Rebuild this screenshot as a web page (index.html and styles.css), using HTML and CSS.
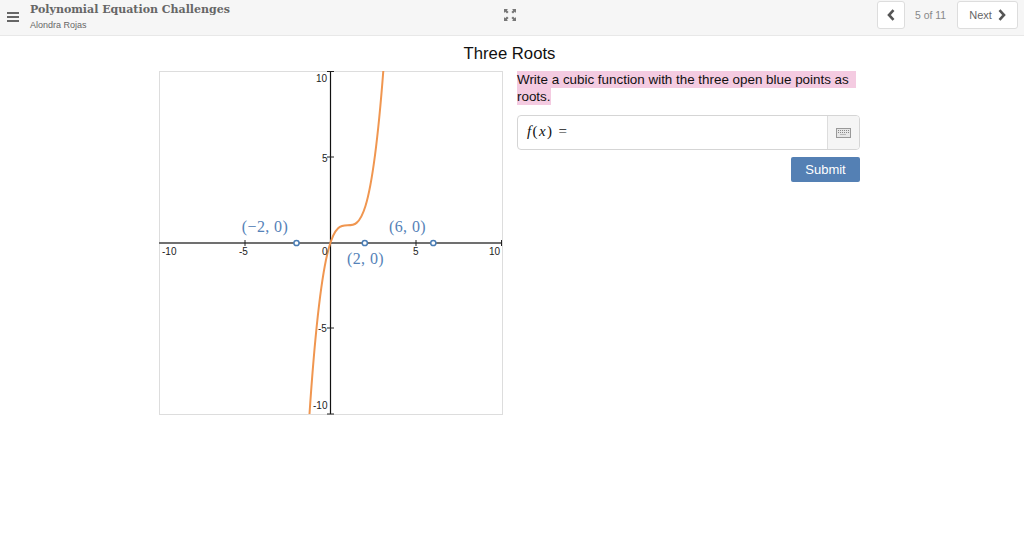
FILE: index.html
```html
<!DOCTYPE html>
<html lang="en">
<head>
    <meta charset="UTF-8">
    <title>Polynomial Equation Challenges</title>
    <link rel="stylesheet" href="styles.css">
</head>
<body>
    <header class="top-bar">
        <div class="top-left">
            <svg class="menu-icon" width="12" height="10" viewBox="0 0 12 10">
                <path d="M0 1h12M0 5h12M0 9h12" stroke="#666" stroke-width="2"/>
            </svg>
            <div class="deck-info">
                <div class="deck-title">Polynomial Equation Challenges</div>
                <div class="deck-author">Alondra Rojas</div>
            </div>
        </div>
        <svg class="expand-icon" width="12" height="12" viewBox="0 0 12 12">
            <!-- four small arrows pointing out -->
            <path d="M0 0h4L2.8 1.2 4.6 3 3 4.6 1.2 2.8 0 4zM12 0H8l1.2 1.2L7.4 3 9 4.6l1.8-1.8L12 4zM0 12h4l-1.2-1.2L4.6 9 3 7.4l-1.8 1.8L0 8zM12 12H8l1.2-1.2L7.4 9 9 7.4l1.8 1.8L12 8z" fill="#777"/>
        </svg>
        <nav class="top-nav">
            <button class="nav-btn prev-btn">
                <svg width="8" height="12" viewBox="0 0 8 12"><path d="M6.5 1.2 2 6l4.5 4.8" fill="none" stroke="#555" stroke-width="2.6"/></svg>
            </button>
            <span class="page-count">5 of 11</span>
            <button class="nav-btn next-btn">
                Next
                <svg width="8" height="12" viewBox="0 0 8 12"><path d="M1.5 1.2 6 6l-4.5 4.8" fill="none" stroke="#555" stroke-width="2.6"/></svg>
            </button>
        </nav>
    </header>

    <main class="screen">
        <h1 class="screen-title">Three Roots</h1>
        <div class="screen-body">
            <svg class="graph" width="344" height="344" viewBox="0 0 344 344">
                <rect x="0.5" y="0.5" width="343" height="343" fill="#fff" stroke="#ddd"/>
                <path d="M0 172H343" stroke="#707070" stroke-width="2"/>
                <path d="M171.5 0V343" stroke="#111" stroke-width="1.2"/>
                <path d="M86 169V175M257 169V175M342.5 169V175M168 86H175M168 257H175M168 0.5H175M168 343H175" stroke="#222"/>
                <path d="M150.5 343C175.1 -22.1 199.7 319.3 224.3 0" fill="none" stroke="#f09650" stroke-width="2"/>
                <g class="tick-labels">
                    <text x="3" y="184">-10</text>
                    <text x="80" y="184">-5</text>
                    <text x="163" y="184">0</text>
                    <text x="254" y="184">5</text>
                    <text x="330" y="184">10</text>
                    <text x="157" y="11">10</text>
                    <text x="163" y="91">5</text>
                    <text x="159" y="261">-5</text>
                    <text x="154" y="338">-10</text>
                </g>
                <g class="point-labels">
                    <text x="106" y="161" text-anchor="middle">(−2, 0)</text>
                    <text x="248.5" y="161" text-anchor="middle">(6, 0)</text>
                    <text x="206.5" y="193" text-anchor="middle">(2, 0)</text>
                </g>
                <g fill="#fff" stroke="#4a7db5" stroke-width="1.5">
                    <circle cx="137.5" cy="172" r="2.6"/>
                    <circle cx="205.8" cy="172" r="2.6"/>
                    <circle cx="274.3" cy="172" r="2.6"/>
                </g>
            </svg>
            <section class="question">
                <p class="prompt"><span class="highlight">Write a cubic function with the three open blue points as&nbsp;&nbsp; roots.</span></p>
                <div class="answer-box">
                    <div class="math-input"><i>f</i>(<i>x</i>) =</div>
                    <div class="keyboard-btn">
                        <svg width="15" height="10" viewBox="0 0 15 10">
                            <rect x="0.5" y="0.5" width="14" height="9" fill="#e6e6e6" stroke="#999"/>
                            <path d="M2 2.5h11M2 4.5h11M4.5 6.5h6" stroke="#888" stroke-dasharray="1 1"/>
                        </svg>
                    </div>
                </div>
                <div class="submit-row">
                    <button class="submit-btn">Submit</button>
                </div>
            </section>
        </div>
    </main>
</body>
</html>
```

FILE: styles.css
```css
body {
    margin: 0;
    background-color: #fff;
    font-family: "Liberation Sans", Arial, sans-serif;
    color: #111;
}
.top-bar {
    display: grid;
    grid-template-columns: 1fr auto 1fr;
    align-items: center;
    height: 35px;
    padding: 0 6px 0 7px;
    background-color: #f6f6f6;
    border-bottom: 1px solid #e8e8e8;
}
.top-left {
    display: flex;
    align-items: center;
    gap: 11px;
}
.menu-icon {
    margin-top: -2px;
}
.deck-info {
    margin-top: -1px;
}
.deck-title {
    font-family: "DejaVu Serif", serif;
    font-weight: bold;
    font-size: 11px;
    line-height: 16px;
    color: #666;
}
.deck-author {
    margin-top: 1px;
    font-size: 9px;
    line-height: 13px;
    color: #666;
}
.expand-icon {
    margin-left: -6px;
    margin-top: -6px;
}
.top-nav {
    display: flex;
    justify-content: flex-end;
    align-items: center;
    gap: 10px;
    margin-top: -5px;
}
.nav-btn {
    display: flex;
    align-items: center;
    justify-content: center;
    gap: 6px;
    height: 28px;
    padding: 0;
    background-color: #fff;
    border: 1px solid #ddd;
    border-radius: 3px;
    font-family: inherit;
    font-size: 11px;
    color: #666;
}
.prev-btn { width: 28px; }
.next-btn { width: 61px; }
.page-count {
    margin-right: 1px;
    font-size: 10.4px;
    color: #888;
}
.screen {
    width: 701px;
    margin-left: 159px;
}
.screen-title {
    margin: 8px 0 7px;
    font-size: 16.7px;
    font-weight: normal;
    line-height: 20px;
    text-align: center;
}
.screen-body {
    display: flex;
    gap: 14px;
}
.graph {
    display: block;
    flex: none;
}
.tick-labels text {
    font-size: 10px;
    fill: #222;
}
.point-labels text {
    font-family: "Liberation Serif", serif;
    font-size: 16px;
    letter-spacing: 0.4px;
    fill: #5582b8;
}
.question {
    flex: 1;
}
.prompt {
    margin: 0;
    padding-top: 1px;
    font-size: 13.4px;
    line-height: 16.5px;
}
.highlight {
    padding: 1px 0;
    background-color: #f4cbe1;
}
.answer-box {
    display: flex;
    width: 341px;
    height: 33px;
    margin-top: 10px;
    border: 1px solid #d5d5d5;
    border-radius: 4px;
    overflow: hidden;
}
.math-input {
    flex: 1;
    padding-left: 9px;
    font-family: "Liberation Serif", serif;
    font-size: 15px;
    letter-spacing: 1.4px;
    line-height: 31px;
}
.keyboard-btn {
    display: flex;
    align-items: center;
    justify-content: center;
    width: 31px;
    background-color: #f5f5f5;
    border-left: 1px solid #ddd;
}
.submit-row {
    display: flex;
    justify-content: flex-end;
    margin-top: 7px;
}
.submit-btn {
    width: 69px;
    height: 25px;
    padding: 0;
    background-color: #5480b4;
    border: none;
    border-radius: 2px;
    font-family: inherit;
    font-size: 13px;
    color: #fff;
}
```
